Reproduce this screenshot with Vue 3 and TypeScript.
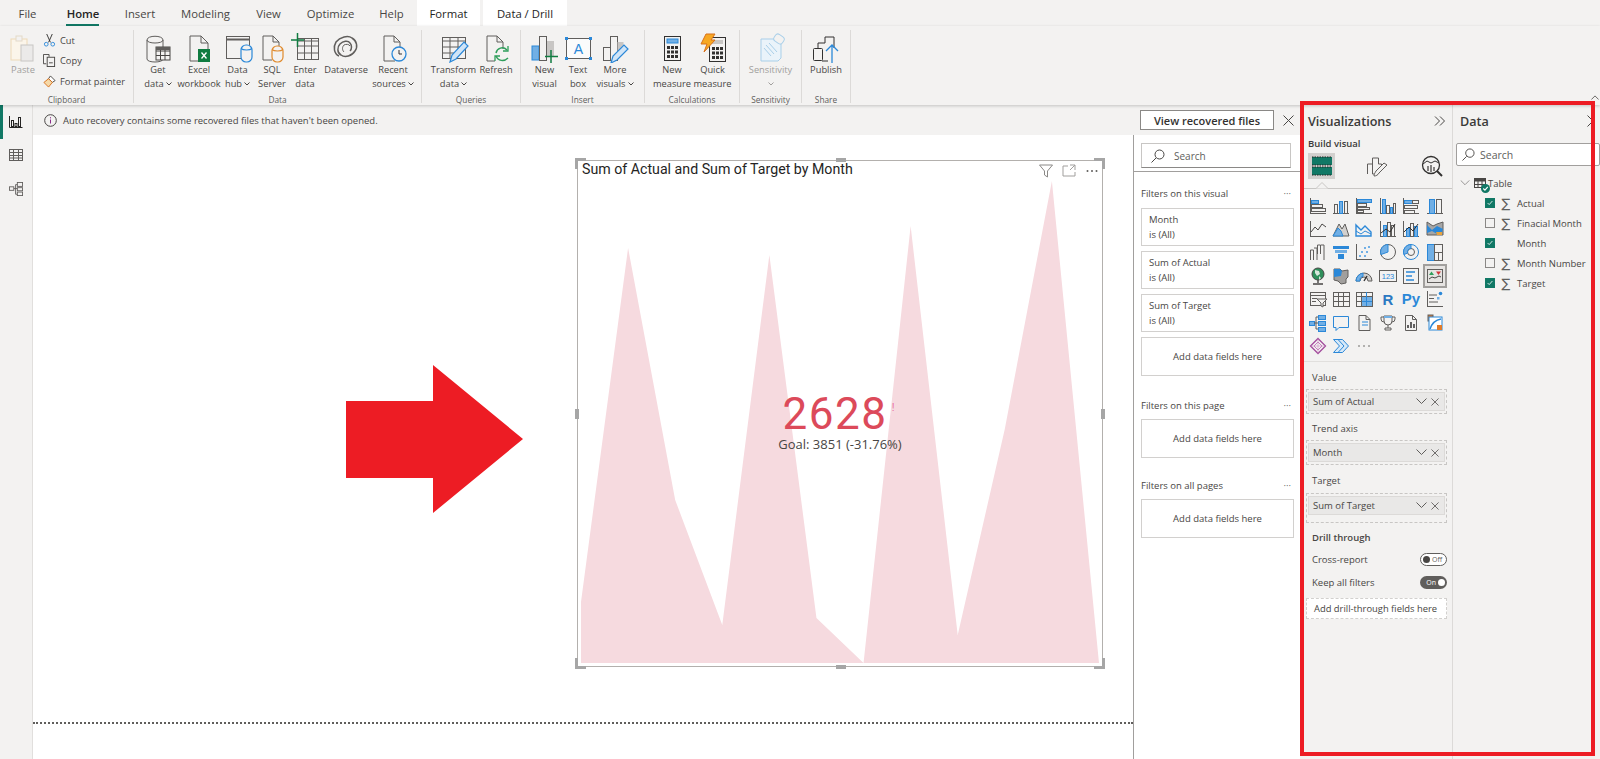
<script setup lang="ts">
interface Tab { label: string; w: number; on?: boolean; ctx?: boolean }
interface Btn { lines: string[]; w: number; icon: string; chev?: boolean; off?: boolean }
interface Group { label: string; w: number; pad: number; btns: Btn[] }

const tabs: Tab[] = [
  { label: 'File', w: 55 },
  { label: 'Home', w: 56, on: true },
  { label: 'Insert', w: 58 },
  { label: 'Modeling', w: 73 },
  { label: 'View', w: 53 },
  { label: 'Optimize', w: 71 },
  { label: 'Help', w: 51 },
  { label: 'Format', w: 63, ctx: true },
  { label: 'Data / Drill', w: 84, ctx: true }
]

const G = '#605e5c'
const B = '#2b88d8'
const L = '#71afe5'

const ribbonIcons: Record<string, string> = {
  paste: `<rect x="3" y="6" width="16" height="21" stroke="#eed9b8" fill="#fbf5ea"/><rect x="8" y="3" width="6" height="5" stroke="#e3d9c8" fill="#f3f2f1"/><rect x="13" y="12" width="12" height="16" stroke="#c8c6c4" fill="#ebeae9"/>`,
  getdata: `<path d="M4 7c0-5 16-5 16 0v19c0 4-16 4-16 0z" fill="#f3f2f1"/><path d="M4 7c0 4 16 4 16 0"/><rect x="13" y="14" width="14" height="13" fill="#f3f2f1" stroke="#484644"/><path d="M13 18h14M13 22.500h14M17.500 14v13M22 14v13" stroke="#484644"/><rect x="13" y="14" width="14" height="3" fill="#605e5c" stroke="none"/>`,
  excel: `<path d="M6 3h11l7 7v9M6 3v25h8M17 3v7h7"/><rect x="14" y="16" width="12" height="13" fill="#107c41" stroke="none"/><path d="M17.500 19.500l5 6M22.500 19.500l-5 6" stroke="#fff" stroke-width="1.300"/>`,
  hub: `<rect x="3.500" y="3.500" width="23" height="22" /><path d="M3 6.500h24" stroke-width="2"/><rect x="18" y="12" width="11" height="17" rx="5" fill="#f3f2f1" stroke="${B}" stroke-width="1.200"/><path d="M18 15.500c2 2 9 2 11 0" stroke="${B}" stroke-width="1.200"/>`,
  sql: `<path d="M6 3h10l6 6v7M6 3v24h9M16 3v6h6"/><rect x="15" y="13" width="11" height="16" rx="5" fill="#f3f2f1" stroke="#e08a2c" stroke-width="1.200"/><path d="M15 16.500c2 2 9 2 11 0" stroke="#e08a2c" stroke-width="1.200"/>`,
  enter: `<rect x="7.500" y="5.500" width="21" height="21"/><path d="M7.500 13h21M7.500 20h21M14.500 5.500v21M21.500 5.500v21M7 8h22"/><path d="M7.500 0v14M1 7h13" stroke="#107c41" stroke-width="1.500"/>`,
  dataverse: `<path d="M8 23c-5-2-6-9-3-14 4-5 12-7 16-4 5 3 6 9 3 13-3 5-10 7-14 4-4-2-4-8-1-11 3-3 8-4 10-1 2 2 2 6 0 8" stroke-width="1.500"/><path d="M13 19c-2-2-2-5 0-7 2-1 5-1 6 1"/>`,
  recent: `<path d="M6 3h10l6 6v7M6 3v25h11M16 3v6h6"/><circle cx="21" cy="21" r="7" fill="#f3f2f1" stroke="${B}" stroke-width="1.300"/><path d="M21 17v4h3" stroke="#323130"/>`,
  transform: `<rect x="3.500" y="4.500" width="23" height="21"/><path d="M3 8h24M3 14h18M3 20h14M11 5v20M19 5v16"/><path d="M11 29l2-7L25 9l4 4-12 13z" fill="#cfe4f7" stroke="${B}" stroke-width="1.200"/>`,
  refresh: `<path d="M6 3h10l6 6v7M6 3v25h8M16 3v6h6"/><path d="M15 20c1-5 7-7 11-3M15 23c2 5 8 6 12 2" stroke="#2f9e5b" stroke-width="1.500"/><path d="M27 13v5h-5M14 28v-5h5" stroke="#2f9e5b" stroke-width="1.300"/>`,
  newvisual: `<rect x="2" y="13" width="7" height="14" fill="${L}" stroke="${B}"/><rect x="9.500" y="3.500" width="7" height="24" fill="#f3f2f1"/><rect x="17" y="8" width="7" height="16" fill="#c8c6c4" stroke="none"/><path d="M21 17v13M15 23.500h13" stroke="#107c41" stroke-width="1.500"/>`,
  textbox: `<rect x="3.500" y="5.500" width="24" height="20" fill="#fbfbfb"/><rect x="2" y="4" width="3" height="3" fill="${B}" stroke="none"/><rect x="26" y="4" width="3" height="3" fill="${B}" stroke="none"/><rect x="2" y="24" width="3" height="3" fill="${B}" stroke="none"/><rect x="26" y="24" width="3" height="3" fill="${B}" stroke="none"/><text x="15.500" y="21" text-anchor="middle" font-size="14" font-family="Liberation Sans" fill="${B}" stroke="none">A</text>`,
  more: `<rect x="3.500" y="14.500" width="7" height="13"/><rect x="10.500" y="3.500" width="7" height="24"/><rect x="17.500" y="9" width="6" height="9" fill="#c8c6c4" stroke="none"/><path d="M11 30l2-7L24 12l4 4-11 11z" fill="#cfe4f7" stroke="${B}" stroke-width="1.200"/>`,
  measure: `<rect x="7.500" y="3.500" width="16" height="24" stroke="#323130"/><rect x="10" y="6" width="11" height="4" fill="${L}" stroke="${B}"/><g fill="#323130" stroke="none"><rect x="10" y="13" width="3" height="3"/><rect x="14" y="13" width="3" height="3"/><rect x="18" y="13" width="3" height="3"/><rect x="10" y="17.500" width="3" height="3"/><rect x="14" y="17.500" width="3" height="3"/><rect x="18" y="17.500" width="3" height="3"/><rect x="10" y="22" width="3" height="3"/><rect x="14" y="22" width="3" height="3"/><rect x="18" y="22" width="3" height="3"/></g>`,
  quick: `<rect x="11.500" y="4.500" width="16" height="24" stroke="#323130"/><rect x="14" y="7" width="11" height="4" fill="#c8c6c4" stroke="none"/><g fill="#323130" stroke="none"><rect x="14" y="14" width="3" height="3"/><rect x="18" y="14" width="3" height="3"/><rect x="22" y="14" width="3" height="3"/><rect x="14" y="18.500" width="3" height="3"/><rect x="18" y="18.500" width="3" height="3"/><rect x="22" y="18.500" width="3" height="3"/><rect x="14" y="23" width="3" height="3"/><rect x="18" y="23" width="3" height="3"/><rect x="22" y="23" width="3" height="3"/></g><path d="M8 1h9l-4 6h4L6 19l3-8H3z" fill="#f7a823" stroke="#d8701a"/>`,
  sens: `<path d="M5 6h20v19l-3 3H5z" fill="#eaf3fa" stroke="#a9cfe9"/><path d="M10 12l8 9M13 10l8 9M8 15l7 8" stroke="#a9cfe9"/><rect x="18" y="2" width="10" height="8" rx="3" transform="rotate(35 23 6)" fill="#f3f2f1" stroke="#a9cfe9"/>`,
  publish: `<rect x="2.500" y="15.500" width="9" height="12" rx="1" stroke="#323130"/><path d="M11 28h6M7 15v-5h7V4h9v11" stroke="#323130"/><path d="M21 31V12M15 18l6-6 6 6" stroke="${B}" stroke-width="1.300"/>`
}

const groups: Group[] = [
  { label: 'Data', w: 288, pad: 3, btns: [
    { lines: ['Get', 'data'], w: 42, icon: 'getdata', chev: true },
    { lines: ['Excel', 'workbook'], w: 40, icon: 'excel' },
    { lines: ['Data', 'hub'], w: 37, icon: 'hub', chev: true },
    { lines: ['SQL', 'Server'], w: 32, icon: 'sql' },
    { lines: ['Enter', 'data'], w: 34, icon: 'enter' },
    { lines: ['Dataverse'], w: 48, icon: 'dataverse' },
    { lines: ['Recent', 'sources'], w: 46, icon: 'recent', chev: true }
  ] },
  { label: 'Queries', w: 99, pad: 4, btns: [
    { lines: ['Transform', 'data'], w: 55, icon: 'transform', chev: true },
    { lines: ['Refresh'], w: 30, icon: 'refresh' }
  ] },
  { label: 'Insert', w: 124, pad: 6, btns: [
    { lines: ['New', 'visual'], w: 35, icon: 'newvisual' },
    { lines: ['Text', 'box'], w: 32, icon: 'textbox' },
    { lines: ['More', 'visuals'], w: 42, icon: 'more', chev: true }
  ] },
  { label: 'Calculations', w: 95, pad: 5, btns: [
    { lines: ['New', 'measure'], w: 44, icon: 'measure' },
    { lines: ['Quick', 'measure'], w: 37, icon: 'quick' }
  ] },
  { label: 'Sensitivity', w: 62, pad: 0, btns: [
    { lines: ['Sensitivity', ''], w: 61, icon: 'sens', chev: true, off: true }
  ] },
  { label: 'Share', w: 49, pad: 0, btns: [
    { lines: ['Publish'], w: 48, icon: 'publish' }
  ] }
]

const bar = (x: number, y: number, w: number, h: number, fill = 'none', stroke = G) =>
  `<rect x="${x}.5" y="${y}.5" width="${w}" height="${h}" fill="${fill}" stroke="${stroke}"/>`
const axisL = `<path d="M2.500 2v16M2 17.500h16"/>`

const gallery: string[] = [
  axisL + bar(3, 4, 7, 3, L, B) + bar(3, 8, 11, 3, 'none') + bar(3, 12, 14, 3, 'none'),
  `<path d="M2 17.500h16"/>` + bar(3, 8, 3, 9) + bar(8, 5, 3, 12, L, B) + bar(13, 5, 3, 12),
  axisL + bar(3, 3, 14, 3, L, B) + bar(3, 7, 9, 3) + bar(3, 11, 12, 2) + bar(3, 14, 6, 2),
  axisL + bar(4, 3, 3, 14, L, B) + bar(8, 9, 3, 8) + bar(12, 11, 2, 6, L, B) + bar(15, 7, 2, 10),
  axisL + bar(3, 4, 8, 3, L, B) + bar(11, 4, 6, 3) + bar(3, 9, 13, 3) + bar(3, 14, 10, 3),
  `<path d="M2 17.500h16"/>` + bar(4, 3, 5, 14, L, B) + bar(11, 3, 5, 14),
  axisL + `<path d="M3 13l4-5 3 3 4-6 4 3" stroke="#484644"/>`,
  `<path d="M2 17h16l-4-12-3 5-3-5z" fill="#d2d0ce" stroke="${G}"/><path d="M2 17l5-8 3 3 2 5z" fill="${L}" stroke="${B}"/>`,
  `<path d="M2 6l5 5 4-4 6 6v4H2z" fill="none" stroke="${B}" stroke-width="1.400"/><path d="M2 12l5 3 4-3 6 3" stroke="${B}"/>`,
  axisL + bar(5, 6, 3, 11, L, B) + bar(9, 3, 3, 14) + bar(13, 6, 3, 11) + `<path d="M3 14l5-4 4 3 5-8" stroke="#323130"/>`,
  axisL + bar(5, 9, 3, 8, L, B) + bar(9, 4, 3, 13) + bar(13, 7, 3, 10, L, B) + `<path d="M3 13l5-5 4 4 5-7" stroke="#323130"/>`,
  `<path d="M2 3l6 4 4-2 6-2v13H2z" fill="#a6a6a6" stroke="${G}"/><path d="M2 6l5 5 5-4 6 3-1 3-5 2-5-3-5 2z" fill="${B}" stroke="none"/><path d="M11 13l6 0v3h-5z" fill="#e8a33d" stroke="none"/>`,
  `<path d="M2.500 18V8h3v10M6 6h3v12M9.500 12V3h3v9M13 3h3v15" />`,
  `<path d="M2 4h16v3H2z" fill="${B}" stroke="none"/><path d="M4 8h12v3H4z" fill="${L}" stroke="none"/><path d="M7 12h6v5H7z" fill="${B}" stroke="none"/>`,
  axisL + `<g fill="${L}" stroke="none"><rect x="10" y="5" width="2" height="2"/><rect x="14" y="4" width="2" height="2"/><rect x="7" y="9" width="2" height="2"/><rect x="12" y="9" width="2" height="2"/><rect x="5" y="13" width="2" height="2"/><rect x="10" y="13" width="2" height="2"/></g>`,
  `<circle cx="10" cy="10" r="7.500"/><path d="M10 10V2.500A7.500 7.500 0 0 0 3 12.500z" fill="${L}" stroke="${B}"/>`,
  `<circle cx="10" cy="10" r="7.500" fill="none" stroke="${B}" stroke-width="1"/><circle cx="10" cy="10" r="3.500"/><path d="M10 2.500a7.500 7.500 0 0 0-7 10l3.600-1.400a3.500 3.500 0 0 1 3.400-4.600z" fill="${L}" stroke="${B}"/>`,
  bar(2, 2, 7, 16, L, B) + bar(9, 2, 8, 8) + bar(9, 10, 4, 8) + bar(13, 10, 4, 8),
  `<circle cx="10" cy="8" r="6" fill="#2f8f5b" stroke="#484644"/><path d="M7 4l4 1 1 3-3 2-2-3zM11 10l2 2-2 2z" fill="#d9e7dc" stroke="none"/><path d="M10 14v3M5 18h10" stroke="#484644" stroke-width="1.400"/>`,
  `<path d="M3 3h6l2 2 6-1v7l-2 2v4l-5 1-3-3-4-1z" fill="#a19f9d" stroke="${G}"/><path d="M3 3h6l2 2-1 5-7 1z" fill="${B}" stroke="none"/>`,
  `<path d="M2 15a8 8 0 0 1 16 0h-4a4 4 0 0 0-8 0z" fill="#d2d0ce" stroke="${G}"/><path d="M2 15a8 8 0 0 1 7-7.800v3.200A4 4 0 0 0 6 15z" fill="${L}" stroke="${B}"/><path d="M10 15l3-5" stroke="#323130" stroke-width="1.400"/>`,
  `<rect x="1.500" y="4.500" width="17" height="11"/><text x="10" y="13" text-anchor="middle" font-size="7.500" font-family="Liberation Sans" fill="${B}" stroke="none">123</text>`,
  `<rect x="2.500" y="2.500" width="15" height="15"/><path d="M5 6h9M5 10h6M5 14h8" stroke="${B}" stroke-width="1.500"/>`,
  `<rect x="2.500" y="3.500" width="15" height="13"/><path d="M4 9l2.500-3.500L9 9z" fill="#2f9e5b" stroke="none"/><path d="M11 5.500h5l-2.500 3.500z" fill="#d13438" stroke="none"/><path d="M4 13l3-2 3 1 4-2 2 1" stroke="#484644"/>`,
  bar(2, 3, 15, 13) + `<path d="M2 6.500h15M4 9.500h5M4 12.500h4" /><path d="M9 10h10l-4 4v4l-2-1v-3z" fill="#f3f2f1"/>`,
  bar(2, 3, 16, 14) + `<path d="M2 7.500h16M2 12.500h16M7.500 3v14M12.500 3v14"/>`,
  bar(2, 3, 16, 14) + `<path d="M2 7.500h16M2 12.500h16M7.500 3v14"/><rect x="8" y="8" width="10" height="9" fill="${L}" stroke="none"/><path d="M8 12.500h10M12.500 3v14" stroke="${B}"/>`,
  `<text x="10" y="16" text-anchor="middle" font-size="15" font-weight="700" font-family="Liberation Sans" fill="#2b79c2" stroke="none">R</text>`,
  `<text x="10" y="15" text-anchor="middle" font-size="15" font-weight="700" font-family="Liberation Sans" fill="#2b88d8" stroke="none">Py</text>`,
  axisL + `<path d="M4 6h8M4 9.500h5M4 13h9"/><circle cx="15.500" cy="4.500" r="1.800" fill="${B}" stroke="none"/><rect x="12" y="8" width="2.500" height="2.500" fill="${L}" stroke="none"/>`,
  bar(1, 8, 5, 4, L, B) + bar(10, 2, 7, 4, L, B) + bar(10, 8, 7, 4, L, B) + bar(10, 14, 7, 4, L, B) + `<path d="M6 10h4M8 4v12h2M8 4h2"/>`,
  `<path d="M2.500 3.500h15v11H8l-3 3v-3H2.500z" stroke="${B}"/>`,
  `<path d="M5 2.500h7l4 4v11H5z"/><path d="M12 2.500v4h4"/><path d="M8 9h6M8 12h6" stroke="${B}"/>`,
  `<path d="M6 3h8v5a4 4 0 0 1-8 0zM6 4H3v2a3 3 0 0 0 3 3M14 4h3v2a3 3 0 0 1-3 3M10 12v3M7 17h6v-2H7z" /><rect x="6" y="3" width="8" height="2" fill="${L}" stroke="none"/>`,
  `<path d="M4.500 2.500h7l4 4v11h-11z"/><path d="M11.500 2.500v4h4"/><path d="M7 15v-3M10 15V9M13 15v-4" stroke="#323130" stroke-width="1.500"/>`,
  `<rect x="3" y="2" width="5" height="6" fill="#e07b2a"/><rect x="4" y="4" width="13" height="13" fill="#fff" stroke="${B}"/><path d="M5 16c2-6 5-9 11-10" stroke="${B}" stroke-width="1.500"/><rect x="12" y="12" width="5" height="5" fill="#e07b2a" stroke="none"/>`,
  `<path d="M10 2.500l7.500 7.500-7.500 7.500L2.500 10z" stroke="#a24b9c" stroke-width="1.300"/><path d="M10 6l4 4-4 4-4-4z" stroke="#c583be"/><path d="M2.500 10h15M10 2.500v15" stroke="#c583be" stroke-width="0.500"/>`,
  `<path d="M2.500 3.500h9l6 6.500-6 6.500h-9l6-6.500z" stroke="${B}" fill="#d7e9f8"/><path d="M7 3.500l6 6.500-6 6.500" stroke="${B}"/>`,
  `<circle cx="5" cy="10" r="0.800" fill="${G}" stroke="none"/><circle cx="10" cy="10" r="0.800" fill="${G}" stroke="none"/><circle cx="15" cy="10" r="0.800" fill="${G}" stroke="none"/>`
]

const KPI_INDEX = 23

const visualFilters = ['Month', 'Sum of Actual', 'Sum of Target']

const wells = [
  { label: 'Value', field: 'Sum of Actual', cls: 'w-value' },
  { label: 'Trend axis', field: 'Month', cls: 'w-trend' },
  { label: 'Target', field: 'Sum of Target', cls: 'w-target' }
]

const fields = [
  { name: 'Actual', on: true, sigma: true },
  { name: 'Finacial Month', on: false, sigma: true },
  { name: 'Month', on: true, sigma: false },
  { name: 'Month Number', on: false, sigma: true },
  { name: 'Target', on: true, sigma: true }
]

const chartValues = [602, 248, 500, 625, 255, 618, 663, 226, 635, 429, 181, 663]
const VIS_X = 577
const VIS_Y = 160
const chartPoints = [
  `${581 - VIS_X},${663 - VIS_Y}`,
  ...chartValues.map((y, i) => `${581 + i * 47.09 - VIS_X},${y - VIS_Y}`),
  `${1099 - VIS_X},${663 - VIS_Y}`
].join(' ')
</script>

<template>
  <div class="app">
    <nav class="tabs">
      <div
        v-for="t in tabs"
        :key="t.label"
        class="tab"
        :class="{ on: t.on, ctx: t.ctx }"
        :style="{ width: t.w + 'px' }"
      >
        <span class="tab-label">{{ t.label }}</span>
      </div>
    </nav>

    <header class="ribbon">
      <section class="group clipboard">
        <div class="group-body clip-body">
          <div class="paste">
            <svg class="rb-icon" viewBox="0 0 30 30" fill="none" stroke="#605e5c" v-html="ribbonIcons.paste"></svg>
            <span>Paste</span>
          </div>
          <div class="clip-list">
            <div class="clip-row">
              <svg viewBox="0 0 14 14" fill="none" stroke="#323130"><path d="M4 0l4 9M10 0L6 9"/><circle cx="3.500" cy="11" r="2" stroke="#2b88d8"/><circle cx="10.500" cy="11" r="2" stroke="#2b88d8"/></svg>
              <span>Cut</span>
            </div>
            <div class="clip-row">
              <svg viewBox="0 0 14 14" fill="none" stroke="#484644"><path d="M3.500 10.500H.500V.500h6V3"/><rect x="4.500" y="3.500" width="8" height="10" fill="#f3f2f1"/><path d="M6.500 9.500h4"/></svg>
              <span>Copy</span>
            </div>
            <div class="clip-row">
              <svg viewBox="0 0 14 14" fill="none" stroke="#484644"><path d="M8 1l5 5-3 2-4-4z" fill="#fff"/><path d="M6 4L1 8l5 5 4-5z" fill="#f6d9a8" stroke="#d8701a"/></svg>
              <span>Format painter</span>
            </div>
          </div>
        </div>
        <div class="group-label">Clipboard</div>
      </section>

      <section v-for="g in groups" :key="g.label" class="group" :style="{ width: g.w + 'px' }">
        <div class="group-body" :style="{ paddingLeft: g.pad + 'px' }">
          <div
            v-for="b in g.btns"
            :key="b.lines.join(' ')"
            class="rb-btn"
            :class="{ off: b.off }"
            :style="{ width: b.w + 'px' }"
          >
            <svg class="rb-icon" viewBox="0 0 30 30" fill="none" stroke="#605e5c" v-html="ribbonIcons[b.icon]"></svg>
            <span v-for="(ln, i) in b.lines" :key="i" class="rb-line">
              {{ ln }}<svg v-if="b.chev && i === b.lines.length - 1" class="chev" viewBox="0 0 6 4" fill="none" stroke="currentColor"><path d="M.5.500l2.500 2.500L5.500.500"/></svg>
            </span>
          </div>
        </div>
        <div class="group-label">{{ g.label }}</div>
      </section>
    </header>

    <main class="body">
      <aside class="rail">
        <div class="rail-item active">
          <svg viewBox="0 0 14 12" fill="none" stroke="#252423"><path d="M.500 0v11.500h13M13 0"/><rect x="2.500" y="4.500" width="2" height="6"/><rect x="6" y="7.500" width="2" height="3"/><rect x="9.500" y="1.500" width="2" height="9"/></svg>
        </div>
        <div class="rail-item">
          <svg viewBox="0 0 14 14" fill="none" stroke="#605e5c"><rect x=".5" y="1.500" width="13" height="11"/><path d="M.5 4.500h13M.5 7.500h13M.5 10h13M4.500 1.500v11M9.500 1.500v11"/></svg>
        </div>
        <div class="rail-item">
          <svg viewBox="0 0 16 16" fill="none" stroke="#605e5c"><rect x=".5" y="5.500" width="5" height="4"/><rect x="9.500" y=".5" width="6" height="4.500"/><rect x="9.500" y="6.500" width="6" height="3.500"/><rect x="9.500" y="11.500" width="6" height="4"/><path d="M5.500 7.500h4M7.500 3v11h2M7.500 3h2"/></svg>
        </div>
      </aside>

      <div class="workspace">
        <div class="msgbar">
          <svg class="info" viewBox="0 0 13 13" fill="none" stroke="#484644"><circle cx="6.500" cy="6.500" r="5.800"/><path d="M6.500 5.500v4M6.500 3.200v1.200" stroke="#8a2d8a"/></svg>
          <span class="msg">Auto recovery contains some recovered files that haven't been opened.</span>
          <button class="recover">View recovered files</button>
          <svg class="msg-x" viewBox="0 0 11 11" fill="none" stroke="#484644"><path d="M.5.500l10 10M10.500.500l-10 10"/></svg>
        </div>

        <div class="work">
          <div class="canvas">
            <svg class="arrow" viewBox="0 0 177 148"><polygon points="0,36 87,36 87,0 177,74 87,148 87,113 0,113" fill="#ed1c24"/></svg>

            <div class="visual">
              <svg class="chart" viewBox="0 0 526 507" width="526" height="507"><polygon :points="chartPoints" fill="#f6dadf"/></svg>
              <div class="vis-title">Sum of Actual and Sum of Target by Month</div>
              <div class="vis-tools">
                <svg viewBox="0 0 14 14" fill="none" stroke="#8a8886"><path d="M.5 1h13L8.500 7v6l-3-2V7z"/></svg>
                <svg viewBox="0 0 14 14" fill="none" stroke="#a19f9d"><path d="M6 2H1v10h12V8M8 1h5v5M13 1L8 6"/></svg>
                <svg viewBox="0 0 14 14" fill="#605e5c"><circle cx="2.500" cy="7" r="1"/><circle cx="7" cy="7" r="1"/><circle cx="11.500" cy="7" r="1"/></svg>
              </div>
              <div class="kpi">
                <div class="kpi-row"><span class="kpi-val">2628</span><span class="kpi-mark">!</span></div>
                <div class="kpi-goal">Goal: 3851 (-31.76%)</div>
              </div>
              <i class="h tl"></i><i class="h tm"></i><i class="h tr"></i>
              <i class="h ml"></i><i class="h mr"></i>
              <i class="h bl"></i><i class="h bm"></i><i class="h br"></i>
            </div>

            <div class="page-edge"></div>
          </div>

          <aside class="filters">
            <div class="f-search-wrap">
              <div class="f-search">
                <svg viewBox="0 0 14 14" fill="none" stroke="#484644"><circle cx="8.500" cy="5.500" r="4.500"/><path d="M5 9L.5 13.500"/></svg>
                <span>Search</span>
              </div>
            </div>
            <div class="f-list">
              <div class="f-head first"><span>Filters on this visual</span><span class="dots">···</span></div>
              <div v-for="f in visualFilters" :key="f" class="f-card"><span>{{ f }}</span><span>is (All)</span></div>
              <div class="f-add">Add data fields here</div>
              <div class="f-head"><span>Filters on this page</span><span class="dots">···</span></div>
              <div class="f-add">Add data fields here</div>
              <div class="f-head last"><span>Filters on all pages</span><span class="dots">···</span></div>
              <div class="f-add">Add data fields here</div>
            </div>
          </aside>
        </div>
      </div>

      <aside class="viz">
        <div class="pane-head">
          <span>Visualizations</span>
          <svg class="dbl" viewBox="0 0 12 10" fill="none" stroke="#484644"><path d="M1 .5L5.500 5 1 9.500M6 .5L10.500 5 6 9.500"/></svg>
        </div>
        <div class="build">Build visual</div>
        <div class="viz-tabs">
          <div class="vt sel">
            <svg viewBox="0 0 22 22" fill="none"><rect x="1" y="2" width="20" height="8" fill="#117865"/><rect x="1" y="12" width="20" height="8" fill="#117865"/><path d="M1 2h20M1 10h20M1 12h20M1 20h20" stroke="#252423" stroke-dasharray="1.500 1"/></svg>
          </div>
          <div class="vt">
            <svg viewBox="0 0 22 22" fill="none" stroke="#605e5c"><path d="M1.500 19V9h5V3h6v6h3v3M6.500 9v10h5"/><path d="M8 21c2 0 4-1 5-3l8-8-3-2-8 8c-1 2-2 3-2 5z" fill="#f3f2f1"/></svg>
          </div>
          <div class="vt">
            <svg viewBox="0 0 22 22" fill="none" stroke="#323130"><circle cx="10" cy="10" r="8.500" stroke-width="1.300"/><path d="M16 16l5 5" stroke-width="2"/><path d="M2 9l4-3 4 2 4-2 4 2" stroke-width="1"/><path d="M7 11v5M10 10v7M13 12v4" stroke="#605e5c" stroke-width="1.500"/></svg>
          </div>
          <svg class="caret" viewBox="0 0 18 8" fill="#f3f2f1" stroke="#c8c6c4"><path d="M0 7.500h3L9 1.500l6 6h3"/></svg>
        </div>
        <div class="gallery">
          <div v-for="(ic, i) in gallery" :key="i" class="g-cell">
            <svg
              class="g-icon"
              :class="{ 'g-sel': i === KPI_INDEX }"
              viewBox="0 0 20 20"
              fill="none"
              stroke="#605e5c"
              v-html="ic"
            ></svg>
          </div>
        </div>
        <div class="wells">
          <div v-for="w in wells" :key="w.label" class="well-block" :class="w.cls">
            <div class="well-label">{{ w.label }}</div>
            <div class="well">
              <div class="pill">
                <span>{{ w.field }}</span>
                <svg viewBox="0 0 11 7" fill="none" stroke="#605e5c"><path d="M.5.500L5.500 5.500 10.500.500"/></svg>
                <svg class="x" viewBox="0 0 9 9" fill="none" stroke="#605e5c"><path d="M.5.500l8 8M8.500.500l-8 8"/></svg>
              </div>
            </div>
          </div>
          <div class="drill-title">Drill through</div>
          <div class="toggle-row">
            <span>Cross-report</span>
            <span class="toggle t-off"><i></i><b>Off</b></span>
          </div>
          <div class="toggle-row keep">
            <span>Keep all filters</span>
            <span class="toggle t-on"><b>On</b><i></i></span>
          </div>
          <div class="drill-add">Add drill-through fields here</div>
        </div>
      </aside>

      <aside class="data">
        <div class="pane-head">
          <span>Data</span>
          <svg class="single" viewBox="0 0 7 12" fill="none" stroke="#484644"><path d="M.5.500L6 6 .5 11.500"/></svg>
        </div>
        <div class="d-search">
          <svg viewBox="0 0 14 14" fill="none" stroke="#484644"><circle cx="8.500" cy="5.500" r="4.500"/><path d="M5 9L.5 13.500"/></svg>
          <span>Search</span>
        </div>
        <div class="d-table">
          <svg class="tchev" viewBox="0 0 11 7" fill="none" stroke="#8a8886"><path d="M.5.500L5.500 5.500 10.500.500"/></svg>
          <span class="ticon">
            <svg viewBox="0 0 12 11" fill="none" stroke="#484644"><rect x=".5" y=".5" width="11" height="9"/><rect x=".5" y=".5" width="11" height="2.500" fill="#484644"/><path d="M.5 6.500h11M4 3v7M8 3v7"/></svg>
            <i class="tbadge"><svg viewBox="0 0 8 8" fill="none" stroke="#fff"><path d="M2 4l1.500 1.500L6 2.500"/></svg></i>
          </span>
          <span>Table</span>
        </div>
        <div v-for="f in fields" :key="f.name" class="d-row">
          <span class="cb" :class="{ on: f.on }">
            <svg v-if="f.on" viewBox="0 0 10 10" fill="none" stroke="#fff"><path d="M2 5l2 2 4-4.500"/></svg>
          </span>
          <span class="sig">{{ f.sigma ? '∑' : '' }}</span>
          <span class="d-name">{{ f.name }}</span>
        </div>
      </aside>
    </main>

    <svg class="collapse" viewBox="0 0 10 6" fill="none" stroke="#484644"><path d="M.5 5.500L5 1l4.500 4.500"/></svg>
    <div class="frame"></div>
  </div>
</template>

<style>
html, body { margin: 0; padding: 0; background: #fff; }
</style>

<style scoped>
.app {
  position: relative;
  width: 1600px;
  height: 759px;
  display: flex;
  flex-direction: column;
  overflow: hidden;
  background: #f3f2f1;
  color: #484644;
  font-family: "Open Sans", "Noto Sans", "Liberation Sans", sans-serif;
  font-size: 10px;
}

/* tabs */
.tabs { display: flex; height: 26px; flex: none; }
.tab {
  position: relative;
  display: flex;
  align-items: center;
  justify-content: center;
  font-size: 11.300px;
  color: #484644;
  height: 26px;
}
.tab.on { color: #252423; font-weight: 600; }
.tab.on::after {
  content: "";
  position: absolute;
  left: 11px;
  width: 33px;
  bottom: 0;
  height: 2px;
  background: #117865;
}
.tab.ctx { background: #fff; color: #252423; margin-right: 3px; }

/* ribbon */
.ribbon {
  position: relative;
  z-index: 2;
  flex: none;
  display: flex;
  height: 79px;
  box-sizing: border-box;
  padding-top: 4px;
  box-shadow: 0 1px 3px rgba(0, 0, 0, 0.2);
}
.group {
  height: 73px;
  display: flex;
  flex-direction: column;
  box-sizing: border-box;
  border-right: 1px solid #dcdad8;
  flex: none;
}
.group-body { flex: 1; display: flex; min-height: 0; }
.group-label {
  height: 12px;
  line-height: 12px;
  margin-bottom: -3px;
  text-align: center;
  font-size: 8.300px;
  color: #605e5c;
}
.clipboard { width: 134px; }
.clip-body { padding-top: 3px; }
.paste {
  width: 46px;
  display: flex;
  flex-direction: column;
  align-items: center;
  color: #a19f9d;
  font-size: 9.400px;
  line-height: 14px;
}
.clip-list { display: flex; flex-direction: column; margin: -3px 0 0 -3px; }
.clip-row {
  height: 20.500px;
  display: flex;
  align-items: center;
  gap: 4px;
  font-size: 9.300px;
  color: #484644;
  white-space: nowrap;
}
.clip-row svg { width: 13px; height: 13px; flex: none; }
.rb-btn {
  flex: none;
  display: flex;
  flex-direction: column;
  align-items: center;
  padding-top: 3px;
  font-size: 9.300px;
  line-height: 13.500px;
  color: #484644;
  white-space: nowrap;
}
.rb-btn.off { color: #a19f9d; }
.rb-icon { width: 30px; height: 30px; flex: none; }
.rb-line { display: flex; align-items: center; justify-content: center; gap: 2px; height: 13.500px; }
.chev { width: 6px; height: 4px; margin-top: 1px; }

/* body */
.body { flex: 1; display: flex; min-height: 0; }
.rail {
  width: 33px;
  flex: none;
  box-sizing: border-box;
  border-right: 1px solid #e1dfdd;
  display: flex;
  flex-direction: column;
}
.rail-item {
  height: 33.500px;
  display: flex;
  align-items: center;
  justify-content: center;
  box-sizing: border-box;
}
.rail-item svg { width: 14px; height: 14px; }
.rail-item.active { border-left: 3px solid #117865; padding-right: 3px; }

.workspace { width: 1267px; flex: none; display: flex; flex-direction: column; }
.msgbar {
  height: 30px;
  flex: none;
  display: flex;
  align-items: center;
  padding-left: 11px;
  background: #f3f2f1;
}
.info { width: 13px; height: 13px; flex: none; }
.msg { margin-left: 6px; width: 1077px; flex: none; font-size: 9.500px; color: #484644; white-space: nowrap; }
.recover {
  width: 134px;
  height: 20px;
  padding: 0;
  background: #fff;
  border: 1px solid #8a8886;
  font: 600 11px "Open Sans", sans-serif;
  color: #323130;
  flex: none;
}
.msg-x { width: 11px; height: 11px; margin-left: 9px; flex: none; }
.work { flex: 1; display: flex; min-height: 0; }

.canvas { position: relative; width: 1100px; flex: none; background: #fff; }
.arrow { position: absolute; left: 313px; top: 230px; width: 177px; height: 148px; }
.page-edge {
  position: absolute;
  left: 0;
  right: 0;
  top: 587px;
  border-top: 2px dotted #605e5c;
}

.visual {
  position: absolute;
  left: 544px;
  top: 25px;
  width: 526px;
  height: 507px;
  box-sizing: border-box;
  border: 1px solid #b3b0ad;
}
.chart { position: absolute; left: -1px; top: -1px; }
.vis-title {
  position: absolute;
  left: 4px;
  top: -1px;
  font-family: Roboto, "Liberation Sans", sans-serif;
  font-size: 14.200px;
  line-height: 18px;
  color: #252423;
  white-space: nowrap;
}
.vis-tools { position: absolute; right: 3px; top: 3px; display: flex; gap: 9px; }
.vis-tools svg { width: 14px; height: 14px; }
.kpi {
  position: absolute;
  left: 0;
  right: 0;
  top: 231px;
  display: flex;
  flex-direction: column;
  align-items: center;
}
.kpi-row { position: relative; display: flex; margin-right: 10px; }
.kpi-val {
  font-family: Roboto, "Liberation Sans", sans-serif;
  font-size: 44px;
  font-weight: 400;
  line-height: 44px;
  letter-spacing: 1.500px;
  color: #dc4a5a;
}
.kpi-mark {
  position: absolute;
  right: -7px;
  top: 10px;
  font: 10px "Liberation Sans", sans-serif;
  color: #e86aa0;
}
.kpi-goal { font-size: 13px; line-height: 16px; color: #484644; }

.h { position: absolute; background: #a6a6a6; }
.tm, .bm { width: 10px; height: 4px; left: 258px; }
.tm { top: -3px; }
.bm { bottom: -3px; }
.ml, .mr { width: 4px; height: 10px; top: 248px; }
.ml { left: -3px; }
.mr { right: -3px; }
.tl, .tr, .bl, .br { width: 8px; height: 8px; background: transparent; }
.tl { left: -3px; top: -3px; border-left: 3px solid #a6a6a6; border-top: 3px solid #a6a6a6; }
.tr { right: -3px; top: -3px; border-right: 3px solid #a6a6a6; border-top: 3px solid #a6a6a6; }
.bl { left: -3px; bottom: -3px; border-left: 3px solid #a6a6a6; border-bottom: 3px solid #a6a6a6; }
.br { right: -3px; bottom: -3px; border-right: 3px solid #a6a6a6; border-bottom: 3px solid #a6a6a6; }

/* filters */
.filters {
  width: 167px;
  flex: none;
  box-sizing: border-box;
  background: #fff;
  border-left: 1px solid #a19f9d;
  display: flex;
  flex-direction: column;
}
.f-search-wrap { height: 37px; flex: none; box-sizing: border-box; padding: 8px 0 0 7px; border-bottom: 1px solid #a19f9d; }
.f-search {
  width: 150px;
  height: 25px;
  box-sizing: border-box;
  border: 1px solid #c8c6c4;
  border-bottom-color: #8a8886;
  display: flex;
  align-items: center;
  gap: 9px;
  padding-left: 9px;
  font-size: 10px;
  color: #605e5c;
}
.f-search svg { width: 14px; height: 14px; flex: none; }
.f-list { padding: 0 6px 0 7px; display: flex; flex-direction: column; }
.f-head {
  display: flex;
  justify-content: space-between;
  height: 14px;
  line-height: 14px;
  margin: 23px 0 6px;
  padding-right: 3px;
  font-size: 9.500px;
  color: #484644;
}
.f-head.first { margin-top: 15px; margin-bottom: 7px; }
.f-head.last { margin-top: 21px; margin-bottom: 6px; }
.dots { color: #605e5c; letter-spacing: 0; }
.f-card, .f-add {
  width: 153px;
  box-sizing: border-box;
  border: 1px solid #d2d0ce;
  background: #fff;
  font-size: 9.500px;
  color: #484644;
}
.f-card {
  height: 38px;
  display: flex;
  flex-direction: column;
  justify-content: center;
  padding-left: 7px;
  line-height: 15px;
  margin-bottom: 5px;
}
.f-add {
  height: 39px;
  display: flex;
  align-items: center;
  justify-content: center;
}

/* viz pane */
.viz {
  width: 153px;
  flex: none;
  box-sizing: border-box;
  border-right: 1px solid #dcdad8;
  padding-left: 8px;
  display: flex;
  flex-direction: column;
}
.pane-head {
  height: 32px;
  flex: none;
  display: flex;
  align-items: center;
  font-size: 12.600px;
  font-weight: 600;
  color: #3b3a39;
  position: relative;
}
.dbl { position: absolute; left: 126px; top: 11px; width: 12px; height: 10px; }
.build { height: 13px; line-height: 14px; font-size: 9.500px; font-weight: 600; color: #3b3a39; }
.viz-tabs {
  position: relative;
  height: 39px;
  margin-left: -8px;
  box-sizing: border-box;
  border-bottom: 1px solid #c8c6c4;
  flex: none;
  margin-right: 0;
}
.vt {
  position: absolute;
  top: 3px;
  width: 27px;
  height: 26px;
  display: flex;
  align-items: center;
  justify-content: center;
}
.vt svg { width: 22px; height: 22px; }
.vt.sel { left: 8px; background: #d2d0ce; }
.vt:nth-child(2) { left: 63px; }
.vt:nth-child(3) { left: 118px; }
.caret { position: absolute; left: 13px; bottom: -1px; width: 18px; height: 8px; }
.gallery {
  margin-top: 5px;
  display: grid;
  grid-template-columns: repeat(6, 23.400px);
  grid-auto-rows: 23.400px;
  flex: none;
  height: 168px;
  border-bottom: 1px solid #e1dfdd;
  margin-right: -5px;
  width: 152px;
  box-sizing: border-box;
  margin-left: -8px;
  padding-left: 6px;
}
.g-cell { display: flex; align-items: center; justify-content: center; }
.g-icon { width: 20px; height: 20px; box-sizing: border-box; }
.g-sel { outline: 2px solid #a19f9d; background: #e6e4e2; }
.wells { display: flex; flex-direction: column; margin-left: -2px; }
.well-block { display: flex; flex-direction: column; }
.well-label { padding-left: 6px; height: 14px; line-height: 14px; margin: 8px 0 4px; font-size: 9.500px; color: #484644; }
.w-value .well-label { margin-top: 9px; }
.well {
  width: 141px;
  height: 25px;
  box-sizing: border-box;
  border: 1px dashed #c8c6c4;
  padding: 2px 1px;
}
.w-target .well { height: 30px; }
.w-target .well-label { margin-top: 9px; margin-bottom: 5px; }
.pill {
  height: 19px;
  display: flex;
  align-items: center;
  background: #e9e8e7;
  border: 1px solid #dcdad8;
  box-sizing: border-box;
  padding: 0 5px 0 4px;
  font-size: 9.500px;
  color: #484644;
}
.pill span { flex: 1; }
.pill svg { width: 11px; height: 7px; }
.pill .x { width: 8px; height: 8px; margin-left: 4px; }
.drill-title { padding-left: 6px; margin-top: 8px; height: 14px; line-height: 14px; font-size: 9.500px; font-weight: 600; }
.toggle-row {
  display: flex;
  align-items: center;
  justify-content: space-between;
  width: 141px;
  height: 14px;
  padding-left: 6px;
  box-sizing: border-box;
  margin-top: 7px;
  font-size: 9.500px;
}
.toggle-row.keep { margin-top: 9px; }
.toggle {
  width: 27px;
  height: 13px;
  box-sizing: border-box;
  border-radius: 7px;
  display: flex;
  align-items: center;
  gap: 2px;
  padding: 0 2px;
  font-size: 7px;
  line-height: 1;
}
.toggle i { width: 7px; height: 7px; border-radius: 50%; flex: none; }
.toggle b { font-weight: 400; }
.t-off { border: 1px solid #605e5c; background: #fff; color: #605e5c; }
.t-off i { background: #484644; }
.t-on { background: #605e5c; color: #fff; justify-content: flex-end; }
.t-on i { background: #fff; }
.drill-add {
  margin-top: 9px;
  width: 141px;
  height: 21px;
  box-sizing: border-box;
  border: 1px dashed #d2d0ce;
  background: #fff;
  display: flex;
  align-items: center;
  padding-left: 7px;
  font-size: 9.400px;
  white-space: nowrap;
}

/* data pane */
.data { flex: 1; min-width: 0; padding-left: 7px; display: flex; flex-direction: column; }
.data .pane-head { height: 32px; }
.single { position: absolute; left: 127px; top: 10px; width: 7px; height: 12px; }
.d-search {
  margin: 6px 0 0 -4px;
  width: 144px;
  height: 23px;
  box-sizing: border-box;
  flex: none;
  background: #fff;
  border: 1px solid #a19f9d;
  border-radius: 2px;
  display: flex;
  align-items: center;
  gap: 5px;
  padding-left: 5px;
  font-size: 10.500px;
  color: #605e5c;
}
.d-search svg { width: 13px; height: 13px; }
.d-table { display: flex; align-items: center; height: 20px; margin-top: 7px; font-size: 9.500px; }
.tchev { width: 10px; height: 6px; margin-left: 0; }
.ticon { position: relative; width: 13px; height: 11px; margin: 0 1px 0 4px; display: block; }
.ticon svg { width: 12px; height: 11px; display: block; }
.tbadge {
  position: absolute;
  left: 7px;
  top: 6px;
  width: 9px;
  height: 9px;
  border-radius: 50%;
  background: #117865;
  display: block;
}
.tbadge svg { width: 9px; height: 9px; }
.d-row { display: flex; align-items: center; height: 20px; padding-left: 25px; font-size: 9.500px; white-space: nowrap; }
.cb {
  width: 10px;
  height: 10px;
  box-sizing: border-box;
  border: 1px solid #8a8886;
  flex: none;
  display: block;
}
.cb.on { background: #117865; border-color: #117865; }
.cb svg { display: block; width: 8px; height: 8px; }
.sig { width: 22px; flex: none; text-align: center; font: 13px "DejaVu Sans", sans-serif; color: #605e5c; }
.d-name { color: #484644; }

.collapse { position: absolute; left: 1591px; top: 95px; width: 8px; height: 5px; }
.frame {
  position: absolute;
  left: 1300px;
  top: 101px;
  width: 295px;
  height: 655px;
  box-sizing: border-box;
  border: 4px solid #ed1c24;
  pointer-events: none;
  z-index: 5;
}
</style>
